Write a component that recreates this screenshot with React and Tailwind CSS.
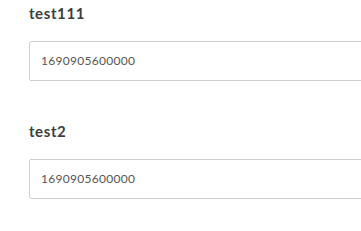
export default function App() {
  const items = [
    { label: "test111", value: "1690905600000" },
    { label: "test2", value: "1690905600000" },
  ];
  return (
    <div className="w-[361px] h-[231px] bg-white overflow-hidden pl-[29px] pt-[3px]" style={{ fontFamily: "Lato, 'Noto Sans', sans-serif" }}>
      {items.map((it, i) => (
        <div key={i} className={i === 0 ? "" : "mt-[40px]"}>
          <div className="h-[20px] text-[15px] leading-[20px] font-bold tracking-[0.6px] text-[#3d3d3d]">{it.label}</div>
          <div className="mt-[18px] w-[340px] h-[40px] border border-[#cfcfcf] rounded-[2px] flex items-center pl-[11px] text-[12px] tracking-[0.3px] text-[#555]">
            {it.value}
          </div>
        </div>
      ))}
    </div>
  );
}
